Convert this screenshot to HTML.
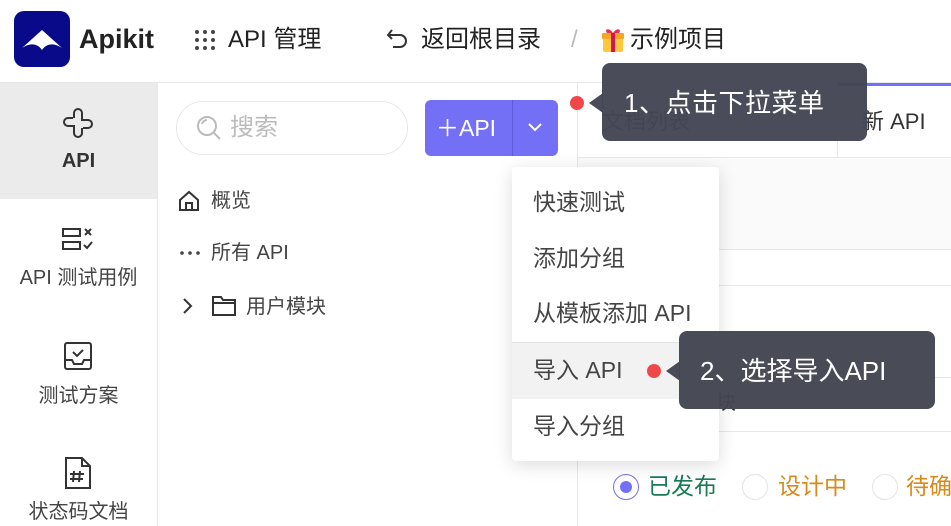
<!DOCTYPE html>
<html><head><meta charset="utf-8">
<style>
*{margin:0;padding:0;box-sizing:border-box}
body{width:951px;height:526px;overflow:hidden;background:#fff;font-family:"Liberation Sans","Noto Sans CJK SC",sans-serif;color:#333;position:relative}
.a{position:absolute}
.t{position:absolute;white-space:nowrap;line-height:1}
</style></head><body>
<div class="a" style="left:14px;top:11px;width:56px;height:56px;border-radius:10px;background:#080a8a"></div>
<svg class="a" style="left:14px;top:11px" width="56" height="56" viewBox="0 0 56 56"><path d="M8 37 L28 19 L48 37 C39 31 32 33 28 39 C24 33 17 31 8 37Z" fill="#fff"/></svg>
<div class="t" style="left:79px;top:26px;font-size:27px;font-weight:bold;color:#222">Apikit</div>
<svg class="a" style="left:194px;top:29px" width="22" height="22"><g fill="#444"><circle cx="3" cy="3" r="2"/><circle cx="11" cy="3" r="2"/><circle cx="19" cy="3" r="2"/><circle cx="3" cy="11" r="2"/><circle cx="11" cy="11" r="2"/><circle cx="19" cy="11" r="2"/><circle cx="3" cy="19" r="2"/><circle cx="11" cy="19" r="2"/><circle cx="19" cy="19" r="2"/></g></svg>
<div class="t" style="left:228px;top:28px;font-size:24px;color:#222">API 管理</div>
<svg class="a" style="left:385px;top:27px" width="26" height="24" viewBox="0 0 26 24"><path d="M7 3 L3 8 L7 12 M3 8 H15 a6 6 0 0 1 0 12 H8" fill="none" stroke="#333" stroke-width="2"/></svg>
<div class="t" style="left:421px;top:28px;font-size:24px;color:#222">返回根目录</div>
<div class="t" style="left:571px;top:28px;font-size:24px;color:#bbb">/</div>
<svg class="a" style="left:601px;top:27px" width="24" height="26" viewBox="0 0 24 26"><rect x="2" y="9" width="20" height="16" rx="2" fill="#fdc83c"/><rect x="1" y="6" width="22" height="6" rx="1" fill="#f5a623"/><rect x="10" y="6" width="4" height="19" fill="#d4145a"/><path d="M12 6 C8 0 3 2 6 6Z M12 6 C16 0 21 2 18 6Z" fill="#e8304a"/></svg>
<div class="t" style="left:630px;top:28px;font-size:24px;color:#222">示例项目</div>
<div class="a" style="left:0;top:82px;width:951px;height:1px;background:#e8e8e8"></div>

<div class="a" style="left:0;top:83px;width:157px;height:116px;background:#ebebeb"></div>
<div class="a" style="left:157px;top:83px;width:1px;height:443px;background:#e8e8e8"></div>
<svg class="a" style="left:61px;top:106px" width="34" height="34" viewBox="0 0 34 34"><g fill="none" stroke="#333" stroke-width="2"><path d="M13 12 V7 a4 4 0 0 1 8 0 V14 H27 a4 4 0 0 1 0 8 H22"/><path d="M21 22 V27 a4 4 0 0 1 -8 0 V20 H7 a4 4 0 0 1 0 -8 H12"/></g></svg>
<div class="t" style="left:0;width:157px;text-align:center;top:151px;font-size:20px;font-weight:bold;color:#333">API</div>
<svg class="a" style="left:61px;top:226px" width="34" height="28" viewBox="0 0 34 28"><g fill="none" stroke="#333" stroke-width="2"><rect x="2" y="3" width="17" height="7"/><rect x="2" y="16" width="17" height="7"/><path d="M24 3 L30 9 M30 3 L24 9 M23 19 L26 22 L31 16"/></g></svg>
<div class="t" style="left:0;width:157px;text-align:center;top:268px;font-size:20px;color:#444">API 测试用例</div>
<svg class="a" style="left:62px;top:340px" width="32" height="32" viewBox="0 0 32 32"><g fill="none" stroke="#333" stroke-width="2"><rect x="3" y="3" width="26" height="26" rx="2"/><path d="M3 20 H10 L12 24 H20 L22 20 H29 M11 12 L15 16 L21 10"/></g></svg>
<div class="t" style="left:0;width:157px;text-align:center;top:386px;font-size:20px;color:#444">测试方案</div>
<svg class="a" style="left:63px;top:456px" width="30" height="34" viewBox="0 0 30 34"><g fill="none" stroke="#333" stroke-width="2"><path d="M3 2 H19 L27 10 V32 H3Z M19 2 V10 H27"/><path d="M11 15 L10 26 M17 15 L16 26 M7 18 H21 M7 23 H20"/></g></svg>
<div class="t" style="left:0;width:157px;text-align:center;top:502px;font-size:20px;color:#444">状态码文档</div>

<div class="a" style="left:176px;top:101px;width:232px;height:54px;border:1px solid #eaeaea;border-radius:27px"></div>
<svg class="a" style="left:195px;top:114px" width="28" height="28" viewBox="0 0 28 28"><circle cx="12" cy="12" r="9" fill="none" stroke="#bbb" stroke-width="2"/><path d="M19 19 L25 25" stroke="#bbb" stroke-width="2"/><path d="M7 10 a5 5 0 0 1 5 -4" fill="none" stroke="#bbb" stroke-width="2"/></svg>
<div class="t" style="left:230px;top:116px;font-size:24px;color:#bbb">搜索</div>
<div class="a" style="left:425px;top:100px;width:133px;height:56px;background:#7470f5;border-radius:6px"></div>
<div class="a" style="left:512px;top:100px;width:1px;height:56px;background:#5f5bd8"></div>
<div class="t" style="left:436px;top:117px;font-size:23px;color:#fff">＋API</div>
<svg class="a" style="left:526px;top:121px" width="18" height="12"><path d="M3 3 L9 9 L15 3" fill="none" stroke="#fff" stroke-width="2"/></svg>
<svg class="a" style="left:177px;top:189px" width="24" height="24" viewBox="0 0 24 24"><path d="M3 11 L12 3 L21 11 V21 H3Z M9 21 V14 H15 V21" fill="none" stroke="#333" stroke-width="2"/></svg>
<div class="t" style="left:211px;top:191px;font-size:20px;color:#444">概览</div>
<svg class="a" style="left:179px;top:250px" width="22" height="6"><g fill="#444"><circle cx="3" cy="3" r="1.8"/><circle cx="11" cy="3" r="1.8"/><circle cx="19" cy="3" r="1.8"/></g></svg>
<div class="t" style="left:211px;top:243px;font-size:20px;color:#444">所有 API</div>
<svg class="a" style="left:182px;top:297px" width="12" height="18"><path d="M2 2 L9 9 L2 16" fill="none" stroke="#333" stroke-width="2"/></svg>
<svg class="a" style="left:211px;top:295px" width="26" height="22" viewBox="0 0 26 22"><path d="M2 2 H10 L12 5 H24 V20 H2Z M2 8 H24" fill="none" stroke="#333" stroke-width="2"/></svg>
<div class="t" style="left:246px;top:297px;font-size:20px;color:#444">用户模块</div>
<div class="a" style="left:577px;top:83px;width:1px;height:443px;background:#e8e8e8"></div>

<div class="a" style="left:578px;top:157px;width:373px;height:92px;background:#fafafa"></div>
<div class="a" style="left:578px;top:157px;width:373px;height:1px;background:#e8e8e8"></div>
<div class="a" style="left:837px;top:83px;width:1px;height:74px;background:#e8e8e8"></div>
<div class="a" style="left:838px;top:83px;width:113px;height:3px;background:#7470f5"></div>
<div class="t" style="left:602px;top:111px;font-size:22px;color:#555">文档列表</div>
<div class="t" style="left:862px;top:111px;font-size:22px;color:#333">新 API</div>
<div class="a" style="left:578px;top:249px;width:373px;height:1px;background:#e8e8e8"></div>
<div class="a" style="left:578px;top:285px;width:373px;height:1px;background:#e8e8e8"></div>
<div class="a" style="left:578px;top:377px;width:373px;height:1px;background:#e8e8e8"></div>
<div class="a" style="left:578px;top:431px;width:373px;height:1px;background:#e8e8e8"></div>
<div class="t" style="left:716px;top:393px;font-size:20px;color:#333">块</div>
<div class="a" style="left:613px;top:474px;width:26px;height:26px;border-radius:50%;border:1px solid #7470f5"></div>
<div class="a" style="left:620px;top:481px;width:12px;height:12px;border-radius:50%;background:#7470f5"></div>
<div class="t" style="left:648px;top:475px;font-size:23px;color:#1a7a55">已发布</div>
<div class="a" style="left:742px;top:474px;width:26px;height:26px;border-radius:50%;border:1px solid #e4e4e4"></div>
<div class="t" style="left:778px;top:475px;font-size:23px;color:#d98a1c">设计中</div>
<div class="a" style="left:872px;top:474px;width:26px;height:26px;border-radius:50%;border:1px solid #e4e4e4"></div>
<div class="t" style="left:906px;top:475px;font-size:23px;color:#d98a1c">待确</div>

<div class="a" style="left:512px;top:167px;width:207px;height:294px;background:#fff;border-radius:4px;box-shadow:0 4px 18px rgba(0,0,0,0.14)"></div>
<div class="a" style="left:512px;top:342px;width:207px;height:57px;background:#f2f2f2"></div>
<div class="a" style="left:512px;top:342px;width:207px;height:1px;background:#e4e4e4"></div>
<div class="t" style="left:533px;top:191px;font-size:23px;color:#444">快速测试</div>
<div class="t" style="left:533px;top:247px;font-size:23px;color:#444">添加分组</div>
<div class="t" style="left:533px;top:302px;font-size:23px;color:#444">从模板添加 API</div>
<div class="t" style="left:533px;top:359px;font-size:23px;color:#444">导入 API</div>
<div class="t" style="left:533px;top:415px;font-size:23px;color:#444">导入分组</div>

<div class="a" style="left:570px;top:96px;width:14px;height:14px;border-radius:50%;background:#f04848"></div>
<div class="a" style="left:602px;top:63px;width:265px;height:78px;background:rgba(67,69,82,0.96);border-radius:8px"></div>
<svg class="a" style="left:589px;top:93px" width="14" height="20"><path d="M14 0 L0 10 L14 20Z" fill="rgba(67,69,82,0.96)"/></svg>
<div class="t" style="left:624px;top:90px;font-size:26px;color:#fff;letter-spacing:0.5px">1、点击下拉菜单</div>
<div class="a" style="left:647px;top:364px;width:14px;height:14px;border-radius:50%;background:#f04848"></div>
<div class="a" style="left:679px;top:331px;width:256px;height:78px;background:rgba(67,69,82,0.97);border-radius:8px"></div>
<svg class="a" style="left:666px;top:361px" width="14" height="20"><path d="M14 0 L0 10 L14 20Z" fill="rgba(67,69,82,0.97)"/></svg>
<div class="t" style="left:700px;top:358px;font-size:26px;color:#fff">2、选择导入API</div>
</body></html>
